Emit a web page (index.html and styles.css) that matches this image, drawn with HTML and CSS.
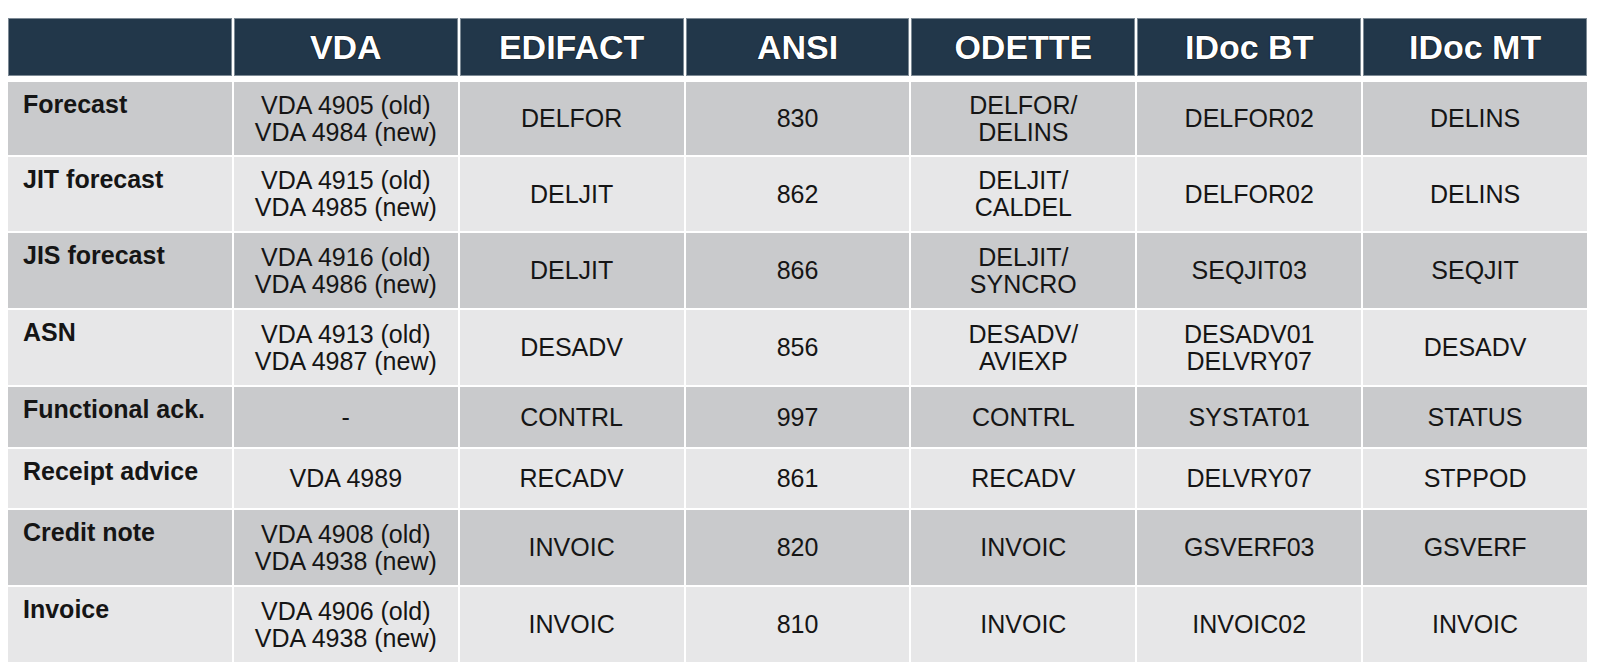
FILE: index.html
```html
<!DOCTYPE html>
<html>
<head>
<meta charset="utf-8">
<link rel="stylesheet" href="styles.css">
</head>
<body>
<div class="table">
  <div class="row head">
    <div class="cell"></div>
    <div class="cell">VDA</div>
    <div class="cell">EDIFACT</div>
    <div class="cell">ANSI</div>
    <div class="cell">ODETTE</div>
    <div class="cell">IDoc BT</div>
    <div class="cell">IDoc MT</div>
  </div>
  <div class="row dark h73">
    <div class="cell label">Forecast</div>
    <div class="cell">VDA 4905 (old)<br>VDA 4984 (new)</div>
    <div class="cell">DELFOR</div>
    <div class="cell">830</div>
    <div class="cell">DELFOR/<br>DELINS</div>
    <div class="cell">DELFOR02</div>
    <div class="cell">DELINS</div>
  </div>
  <div class="row light h74">
    <div class="cell label">JIT forecast</div>
    <div class="cell">VDA 4915 (old)<br>VDA 4985 (new)</div>
    <div class="cell">DELJIT</div>
    <div class="cell">862</div>
    <div class="cell">DELJIT/<br>CALDEL</div>
    <div class="cell">DELFOR02</div>
    <div class="cell">DELINS</div>
  </div>
  <div class="row dark h75">
    <div class="cell label">JIS forecast</div>
    <div class="cell">VDA 4916 (old)<br>VDA 4986 (new)</div>
    <div class="cell">DELJIT</div>
    <div class="cell">866</div>
    <div class="cell">DELJIT/<br>SYNCRO</div>
    <div class="cell">SEQJIT03</div>
    <div class="cell">SEQJIT</div>
  </div>
  <div class="row light h75">
    <div class="cell label">ASN</div>
    <div class="cell">VDA 4913 (old)<br>VDA 4987 (new)</div>
    <div class="cell">DESADV</div>
    <div class="cell">856</div>
    <div class="cell">DESADV/<br>AVIEXP</div>
    <div class="cell">DESADV01<br>DELVRY07</div>
    <div class="cell">DESADV</div>
  </div>
  <div class="row dark h60">
    <div class="cell label">Functional ack.</div>
    <div class="cell">-</div>
    <div class="cell">CONTRL</div>
    <div class="cell">997</div>
    <div class="cell">CONTRL</div>
    <div class="cell">SYSTAT01</div>
    <div class="cell">STATUS</div>
  </div>
  <div class="row light h59">
    <div class="cell label">Receipt advice</div>
    <div class="cell">VDA 4989</div>
    <div class="cell">RECADV</div>
    <div class="cell">861</div>
    <div class="cell">RECADV</div>
    <div class="cell">DELVRY07</div>
    <div class="cell">STPPOD</div>
  </div>
  <div class="row dark h75">
    <div class="cell label">Credit note</div>
    <div class="cell">VDA 4908 (old)<br>VDA 4938 (new)</div>
    <div class="cell">INVOIC</div>
    <div class="cell">820</div>
    <div class="cell">INVOIC</div>
    <div class="cell">GSVERF03</div>
    <div class="cell">GSVERF</div>
  </div>
  <div class="row light h75">
    <div class="cell label">Invoice</div>
    <div class="cell">VDA 4906 (old)<br>VDA 4938 (new)</div>
    <div class="cell">INVOIC</div>
    <div class="cell">810</div>
    <div class="cell">INVOIC</div>
    <div class="cell">INVOIC02</div>
    <div class="cell">INVOIC</div>
  </div>
</div>
</body>
</html>
```

FILE: styles.css
```css
html, body {
  margin: 0;
  padding: 0;
  background: #ffffff;
}
body {
  font-family: "Liberation Sans", Arial, sans-serif;
  color: #151515;
}
.table {
  width: 1579px;
  margin: 18px 0 0 8px;
  display: flex;
  flex-direction: column;
  gap: 2px;
}
.row {
  display: grid;
  grid-template-columns: repeat(7, 1fr);
  column-gap: 2px;
}
.cell {
  display: flex;
  align-items: center;
  justify-content: center;
  text-align: center;
  font-size: 25px;
  line-height: 27px;
}
.head {
  height: 58px;
  margin-bottom: 4px;
}
.head .cell {
  background: #22374a;
  box-shadow: inset 0 0 0 1px #7d8a95;
  color: #ffffff;
  font-weight: bold;
  font-size: 34px;
  text-shadow: 0 0 1px #000, 0 0 1px #000;
}
.dark .cell { background: #c9cacc; }
.light .cell { background: #e7e7e8; }
.cell.label {
  justify-content: flex-start;
  align-items: flex-start;
  text-align: left;
  font-weight: bold;
  padding: 9px 0 0 15px;
}
.h73 { height: 73px; }
.h74 { height: 74px; }
.h75 { height: 75px; }
.h60 { height: 60px; }
.h59 { height: 59px; }
```
